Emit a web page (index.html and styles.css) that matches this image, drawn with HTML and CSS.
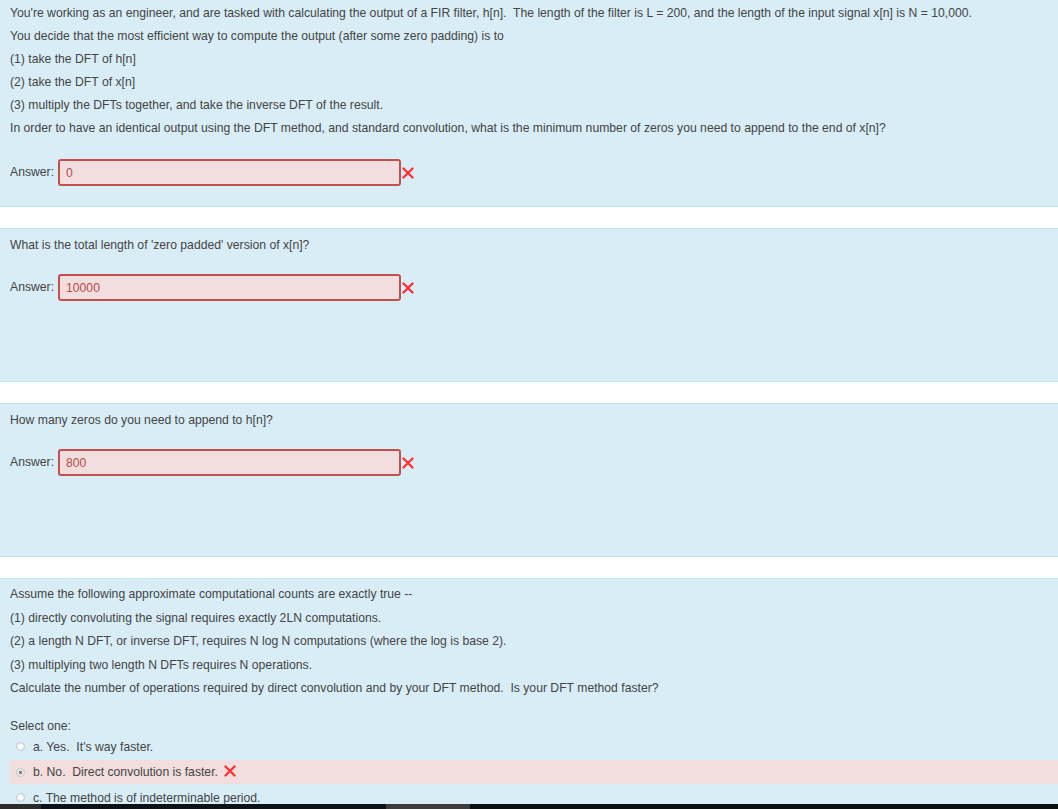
FILE: index.html
```html
<!DOCTYPE html>
<html>
<head>
<meta charset="utf-8">
<title>Quiz</title>
<link rel="stylesheet" href="styles.css">
</head>
<body>
<div class="page">
  <div class="panel first">
    <div class="qtext">
      <p>You're working as an engineer, and are tasked with calculating the output of a FIR filter, h[n].&nbsp; The length of the filter is L = 200, and the length of the input signal x[n] is N = 10,000.</p>
      <p>You decide that the most efficient way to compute the output (after some zero padding) is to</p>
      <p>(1) take the DFT of h[n]</p>
      <p>(2) take the DFT of x[n]</p>
      <p>(3) multiply the DFTs together, and take the inverse DFT of the result.</p>
      <p>In order to have an identical output using the DFT method, and standard convolution, what is the minimum number of zeros you need to append to the end of x[n]?</p>
    </div>
    <div class="ablock">
      <label class="alabel">Answer:</label>
      <input class="answer" type="text" value="0" readonly>
      <svg class="xmark" width="12" height="12" viewBox="0 0 12 12"><path d="M1.5 1.5 L10.5 10.5 M10.5 1.5 L1.5 10.5" stroke="#f33" stroke-width="2.4" stroke-linecap="round"/></svg>
    </div>
  </div>

  <div class="panel tall">
    <div class="qtext">
      <p>What is the total length of 'zero padded' version of x[n]?</p>
    </div>
    <div class="ablock">
      <label class="alabel">Answer:</label>
      <input class="answer" type="text" value="10000" readonly>
      <svg class="xmark" width="12" height="12" viewBox="0 0 12 12"><path d="M1.5 1.5 L10.5 10.5 M10.5 1.5 L1.5 10.5" stroke="#f33" stroke-width="2.4" stroke-linecap="round"/></svg>
    </div>
  </div>

  <div class="panel tall">
    <div class="qtext">
      <p>How many zeros do you need to append to h[n]?</p>
    </div>
    <div class="ablock">
      <label class="alabel">Answer:</label>
      <input class="answer" type="text" value="800" readonly>
      <svg class="xmark" width="12" height="12" viewBox="0 0 12 12"><path d="M1.5 1.5 L10.5 10.5 M10.5 1.5 L1.5 10.5" stroke="#f33" stroke-width="2.4" stroke-linecap="round"/></svg>
    </div>
  </div>

  <div class="panel last">
    <div class="qtext">
      <p>Assume the following approximate computational counts are exactly true --</p>
      <p>(1) directly convoluting the signal requires exactly 2LN computations.</p>
      <p>(2) a length N DFT, or inverse DFT, requires N log N computations (where the log is base 2).</p>
      <p>(3) multiplying two length N DFTs requires N operations.</p>
      <p>Calculate the number of operations required by direct convolution and by your DFT method.&nbsp; Is your DFT method faster?</p>
    </div>
    <div class="choices">
      <div class="prompt">Select one:</div>
      <div class="option"><input class="radio" type="radio" name="q4" disabled><span>a. Yes.&nbsp; It's way faster.</span></div>
      <div class="option wrong"><input class="radio" type="radio" name="q4" checked disabled><span>b. No.&nbsp; Direct convolution is faster.</span>
        <svg class="xmark opt" width="12" height="12" viewBox="0 0 12 12"><path d="M1.5 1.5 L10.5 10.5 M10.5 1.5 L1.5 10.5" stroke="#f33" stroke-width="2.4" stroke-linecap="round"/></svg>
      </div>
      <div class="option"><input class="radio" type="radio" name="q4" disabled><span>c. The method is of indeterminable period.</span></div>
    </div>
  </div>
</div>
<div class="taskbar">
  <div class="seg s1"></div>
  <div class="seg s2"></div>
  <div class="seg s3"></div>
  <div class="seg s4"></div>
</div>
</body>
</html>
```

FILE: styles.css
```css
html, body {
  margin: 0;
  padding: 0;
  background: #ffffff;
}
body {
  font-family: "Liberation Sans", Arial, sans-serif;
  font-size: 12.2px;
  color: #444444;
  overflow: hidden;
}
.page {
  margin-top: -4px;
}
.panel {
  box-sizing: border-box;
  background: #d9edf7;
  border-top: 1px solid #bce8f1;
  border-bottom: 1px solid #bce8f1;
  padding: 5px 0 20px 10px;
  margin-bottom: 21px;
}
.panel.tall {
  min-height: 154px;
}
.panel.first .qtext {
  padding-bottom: 2px;
}
.panel.last {
  padding-top: 4px;
}
.qtext p {
  margin: 0;
  line-height: 23px;
  white-space: nowrap;
}
.panel.last .qtext p {
  line-height: 23.5px;
}
.ablock {
  display: flex;
  align-items: center;
  margin-top: 17px;
}
.alabel {
  line-height: 27px;
  margin-right: 4px;
}
.answer {
  box-sizing: border-box;
  width: 343px;
  height: 27px;
  margin: 0;
  padding: 0 6px;
  border: 2px solid #c4504e;
  border-radius: 3px;
  background: #f2dede;
  color: #b94a48;
  font-family: "Liberation Sans", Arial, sans-serif;
  font-size: 12.2px;
  outline: none;
}
.xmark {
  display: block;
  margin-left: 1px;
}
.choices {
  margin-top: 17px;
}
.prompt {
  line-height: 16px;
  margin-bottom: 1px;
}
.option {
  display: flex;
  align-items: center;
  height: 24px;
  margin-bottom: 1.5px;
  padding-left: 6px;
}
.option.wrong {
  background: #f2dede;
}
.radio {
  -webkit-appearance: none;
  appearance: none;
  box-sizing: border-box;
  width: 9px;
  height: 9px;
  margin: 0 8px 0 0;
  border: 1px solid #c8c8c8;
  border-radius: 50%;
  background: radial-gradient(circle, #ffffff 0, #ececec 100%);
}
.radio:checked {
  background: radial-gradient(circle, #8a8a8a 0, #8a8a8a 1.6px, #eeeeee 2.2px, #e6e6e6 100%);
}
.xmark.opt {
  margin-left: 6px;
  margin-top: -2px;
}
.taskbar {
  position: fixed;
  left: 0;
  right: 0;
  bottom: 0;
  height: 5px;
  display: flex;
}
.seg { height: 100%; }
.s1 { width: 41px; background: #2b2b2b; }
.s2 { width: 345px; background: #0b1318; }
.s3 { width: 84px; background: #3c3c3c; }
.s4 { flex: 1; background: #0a0f12; }
```
